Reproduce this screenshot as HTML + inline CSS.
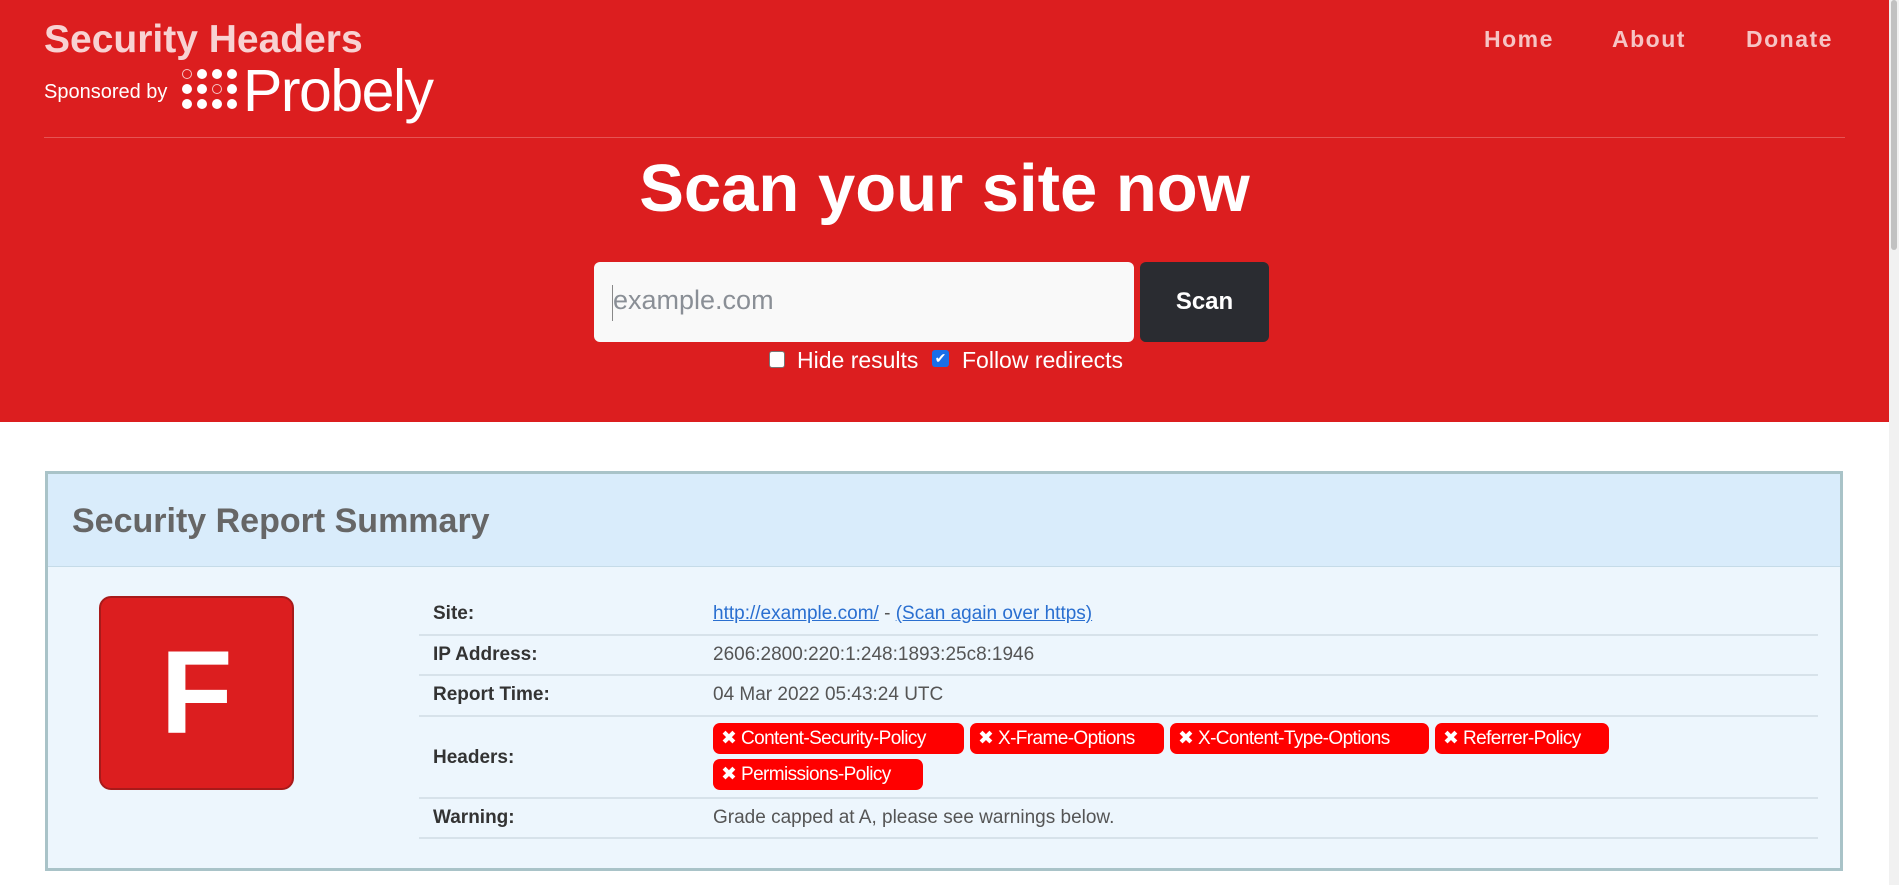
<!DOCTYPE html>
<html><head><meta charset="utf-8"><style>
*{box-sizing:border-box;margin:0;padding:0}
body{width:1899px;height:885px;overflow:hidden;background:#fff;font-family:"Liberation Sans",sans-serif;position:relative}
.a{position:absolute;white-space:nowrap}
#hdr{position:absolute;left:0;top:0;width:1889px;height:422px;background:#dc1e1f}
#sb{position:absolute;left:1889px;top:0;width:10px;height:885px;background:#f1f1f1}
#sb div{position:absolute;left:2px;top:0;width:6px;height:250px;background:#c1c1c1;border-radius:3px}
.nav{color:#f6c4c4;font-weight:bold;font-size:23px;letter-spacing:1.5px;top:26px}
.dot{position:absolute;width:10px;height:10px;border-radius:50%;background:#fff}
.dot.o{background:none;border:1.5px solid #f6c4c4}
.card{position:absolute;left:45px;top:471px;width:1798px;height:400px;border:3px solid #a9c3c8;background:#edf6fd}
.ch{position:absolute;left:0;top:0;width:100%;height:93px;background:#d9ecfb;border-bottom:1px solid #c5dbe8}
.row{position:absolute;left:419px;width:1399px;border-bottom:2px solid #d7e2ea}
.lab{position:absolute;left:14px;font-weight:bold;color:#333;font-size:19px}
.val{position:absolute;left:294px;color:#555;font-size:19px}
.bd{position:absolute;height:31px;background:#f00;color:#fff;border-radius:7px;font-size:19px;line-height:31px;padding-left:8px;letter-spacing:-0.6px;overflow:hidden;white-space:nowrap}
a{color:#2a6fd0}
</style></head><body>
<div id="hdr">
<div class="a" style="left:44px;top:18px;font-size:39px;font-weight:bold;color:#f8d2d2">Security Headers</div>
<div class="a" style="left:44px;top:81px;font-size:20px;color:#fff">Sponsored by</div>
<div class="dot o" style="left:182px;top:69px"></div><div class="dot" style="left:197px;top:69px"></div><div class="dot" style="left:212px;top:69px"></div><div class="dot" style="left:227px;top:69px"></div>
<div class="dot" style="left:182px;top:84px"></div><div class="dot" style="left:197px;top:84px"></div><div class="dot o" style="left:212px;top:84px"></div><div class="dot" style="left:227px;top:84px"></div>
<div class="dot" style="left:182px;top:99px"></div><div class="dot" style="left:197px;top:99px"></div><div class="dot" style="left:212px;top:99px"></div><div class="dot" style="left:227px;top:99px"></div>
<div class="a" style="left:243px;top:57px;font-size:59px;color:#fff;letter-spacing:-1.5px">Probely</div>
<div class="a nav" style="left:1484px">Home</div>
<div class="a nav" style="left:1612px">About</div>
<div class="a nav" style="left:1746px">Donate</div>
<div class="a" style="left:44px;top:137px;width:1801px;height:1px;background:#e65454"></div>
<div class="a" style="left:0;width:1889px;text-align:center;top:150px;font-size:67px;font-weight:bold;color:#fff">Scan your site now</div>
<div class="a" style="left:594px;top:262px;width:540px;height:80px;background:#f9f9f9;border-radius:6px"></div>
<div class="a" style="left:612px;top:285px;width:1px;height:36px;background:#888"></div>
<div class="a" style="left:613px;top:285px;font-size:27px;color:#8a8f96">example.com</div>
<div class="a" style="left:1140px;top:262px;width:129px;height:80px;background:#2a2c31;border-radius:6px;color:#fff;font-weight:bold;font-size:24px;text-align:center;line-height:80px">Scan</div>
<div class="a" style="left:769px;top:351px;width:16px;height:17px;background:#fff;border:1px solid #777;border-radius:3px"></div>
<div class="a" style="left:797px;top:347px;font-size:23px;color:#fff">Hide results</div>
<div class="a" style="left:932px;top:350px;width:17px;height:17px;background:#1a6ee8;border-radius:3px;color:#fff;font-size:14px;line-height:17px;text-align:center">✔</div>
<div class="a" style="left:962px;top:347px;font-size:23px;color:#fff">Follow redirects</div>
</div>
<div id="sb"><div></div></div>
<div class="card">
<div class="ch"><div class="a" style="left:24px;top:28px;font-size:34px;font-weight:bold;color:#666">Security Report Summary</div></div>
</div>
<div class="a" style="left:99px;top:596px;width:195px;height:194px;background:#dc1e1f;border:2px solid #a81a1a;border-radius:12px;color:#fff;font-size:118px;font-weight:bold;text-align:center;line-height:190px">F</div>
<div class="row" style="top:594px;height:42px"><div class="lab" style="top:9px">Site:</div><div class="val" style="top:9px"><a href="#">http://example.com/</a> - <a href="#">(Scan again over https)</a></div></div>
<div class="row" style="top:636px;height:40px"><div class="lab" style="top:8px">IP Address:</div><div class="val" style="top:8px">2606:2800:220:1:248:1893:25c8:1946</div></div>
<div class="row" style="top:676px;height:41px"><div class="lab" style="top:8px">Report Time:</div><div class="val" style="top:8px">04 Mar 2022 05:43:24 UTC</div></div>
<div class="row" style="top:717px;height:82px"><div class="lab" style="top:30px">Headers:</div></div>
<div class="bd" style="left:713px;top:723px;width:251px">✖ Content-Security-Policy</div>
<div class="bd" style="left:970px;top:723px;width:194px">✖ X-Frame-Options</div>
<div class="bd" style="left:1170px;top:723px;width:259px">✖ X-Content-Type-Options</div>
<div class="bd" style="left:1435px;top:723px;width:174px">✖ Referrer-Policy</div>
<div class="bd" style="left:713px;top:759px;width:210px">✖ Permissions-Policy</div>
<div class="row" style="top:799px;height:40px"><div class="lab" style="top:8px">Warning:</div><div class="val" style="top:8px">Grade capped at A, please see warnings below.</div></div>
</body></html>
